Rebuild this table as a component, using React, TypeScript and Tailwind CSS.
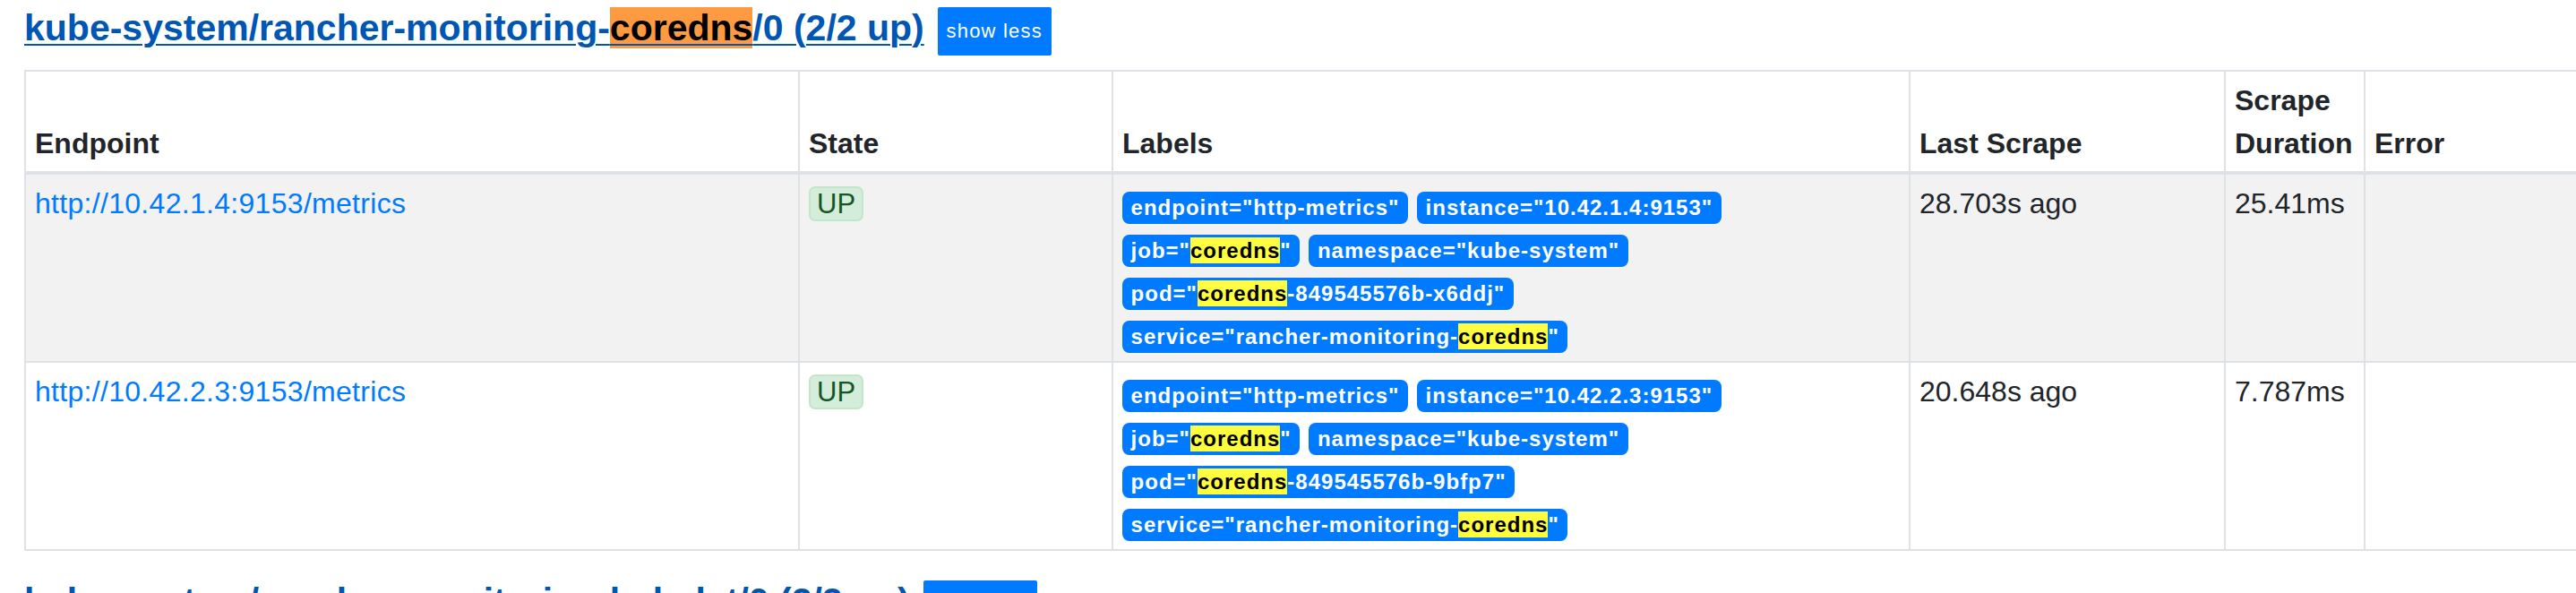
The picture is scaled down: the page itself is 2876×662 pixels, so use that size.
import React from "react";

type Label = { pre: string; hl?: string; post?: string };

const HL = "coredns";

const TARGETS = [
  {
    endpoint: "http://10.42.1.4:9153/metrics",
    instance: "10.42.1.4:9153",
    pod: "-849545576b-x6ddj",
    lastScrape: "28.703s ago",
    duration: "25.41ms",
  },
  {
    endpoint: "http://10.42.2.3:9153/metrics",
    instance: "10.42.2.3:9153",
    pod: "-849545576b-9bfp7",
    lastScrape: "20.648s ago",
    duration: "7.787ms",
  },
];

function labelLines(t: (typeof TARGETS)[number]): Label[][] {
  return [
    [{ pre: 'endpoint="http-metrics"' }, { pre: `instance="${t.instance}"` }],
    [{ pre: 'job="', hl: HL, post: '"' }, { pre: 'namespace="kube-system"' }],
    [{ pre: 'pod="', hl: HL, post: `${t.pod}"` }],
    [{ pre: 'service="rancher-monitoring-', hl: HL, post: '"' }],
  ];
}

function Badge({ label }: { label: Label }) {
  return (
    <span className="mt-[11px] inline-block h-[36px] whitespace-nowrap rounded-[8px] bg-[#007bff] px-[9.6px] py-[6px] text-[24px] font-bold leading-[24px] tracking-[1px] text-white">
      {label.pre}
      {label.hl && <span className="bg-[#ffff3f] py-[1px] text-black">{label.hl}</span>}
      {label.post}
    </span>
  );
}

function Heading({ job, hl }: { job: string; hl?: boolean }) {
  return (
    <div className="flex items-start gap-[15px]">
      <h2 className="text-[41px] font-bold leading-[49px]">
        <a href="#" className="text-[#0056b3] underline decoration-2 underline-offset-[4px]">
          kube-system/rancher-monitoring-
          {hl ? <span className="bg-[#fd9a42] text-black">{job}</span> : job}
          /0 (2/2 up)
        </a>
      </h2>
      <button className="mt-[1px] flex h-[54px] w-[127px] items-center justify-center rounded-[2px] bg-[#007bff] text-[22px] tracking-[1.2px] text-white">
        show less
      </button>
    </div>
  );
}

const th = "border-b-4 border-l-2 border-t-2 border-[#dee2e6] pl-[10px] pr-[10px] pt-[8px] pb-[7px] text-left align-bottom font-bold";
const td = "border-b-2 border-l-2 border-[#dee2e6] pl-[10px] pr-[10px] py-[8px] align-top";

export default function App() {
  return (
    <div className="h-[662px] w-[2876px] overflow-hidden bg-white px-[27px] pt-[7px] font-['Liberation_Sans',Arial,sans-serif] text-[32px] leading-[48px] text-[#212529]">
      <Heading job="coredns" hl />

      <table className="mb-[32px] mt-[16px] w-[2912px] table-fixed border-separate border-spacing-0">
        <thead>
          <tr>
            <th className={`${th} w-[864px]`}>Endpoint</th>
            <th className={`${th} w-[350px]`}>State</th>
            <th className={`${th} w-[890px]`}>Labels</th>
            <th className={`${th} w-[352px]`}>Last Scrape</th>
            <th className={`${th} w-[156px]`}>Scrape Duration</th>
            <th className={`${th} w-[300px]`}>Error</th>
          </tr>
        </thead>
        <tbody>
          {TARGETS.map((t, i) => (
            <tr key={t.endpoint} className={i % 2 === 0 ? "bg-[#f2f2f2]" : "bg-white"}>
              <td className={td}>
                <a href="#" className="tracking-[0.3px] text-[#007bff]">
                  {t.endpoint}
                </a>
              </td>
              <td className={td}>
                <span className="mt-[5px] inline-block h-[39px] rounded-[7px] border-2 border-[#c3e6cb] bg-[#d4edda] px-[7px] text-[31px] leading-[35px] text-[#155724]">
                  UP
                </span>
              </td>
              <td className={td}>
                {labelLines(t).map((line, j) => (
                  <div key={j} className="flex h-[48px] items-start gap-[10px]">
                    {line.map((l) => (
                      <Badge key={l.pre} label={l} />
                    ))}
                  </div>
                ))}
              </td>
              <td className={td}>{t.lastScrape}</td>
              <td className={td}>{t.duration}</td>
              <td className={td}></td>
            </tr>
          ))}
        </tbody>
      </table>

      <Heading job="kubelet" />
    </div>
  );
}
